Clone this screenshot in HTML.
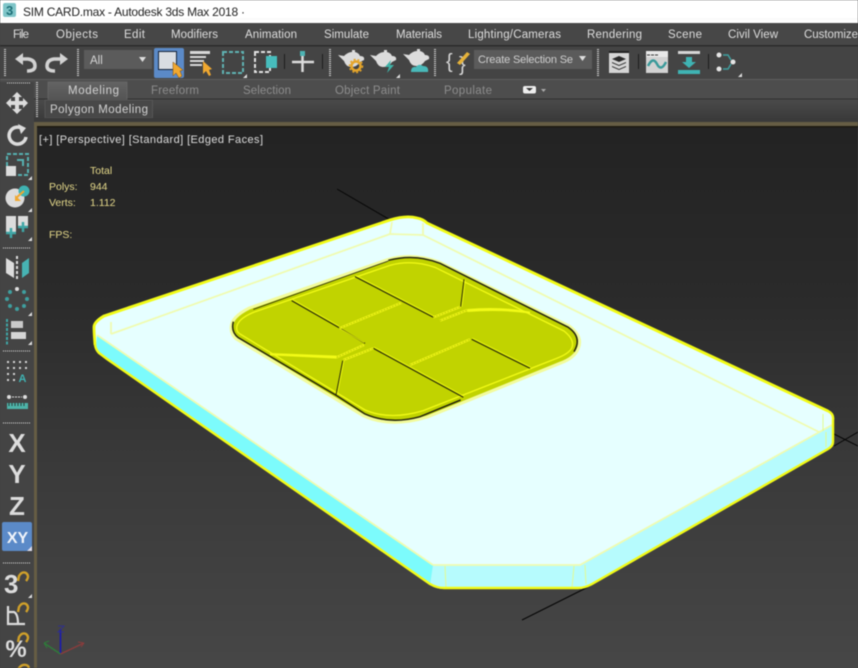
<!DOCTYPE html>
<html>
<head>
<meta charset="utf-8">
<style>
html,body{margin:0;padding:0;background:#444;width:858px;height:668px;overflow:hidden}
svg{display:block;filter:blur(.4px)}
text{font-family:"Liberation Sans",sans-serif}
</style>
</head>
<body>
<svg width="858" height="668" viewBox="0 0 858 668" xmlns="http://www.w3.org/2000/svg">
<defs>
<linearGradient id="vp" x1="0" y1="0" x2="0" y2="1">
<stop offset="0" stop-color="#232323"/><stop offset=".3" stop-color="#2a2a2a"/><stop offset=".62" stop-color="#3a3a3a"/><stop offset="1" stop-color="#474747"/>
</linearGradient>
<linearGradient id="row2" x1="0" y1="0" x2="0" y2="1">
<stop offset="0" stop-color="#4a4a4a"/><stop offset="1" stop-color="#3b3b3b"/>
</linearGradient>
<linearGradient id="tab" x1="0" y1="0" x2="0" y2="1">
<stop offset="0" stop-color="#636363"/><stop offset="1" stop-color="#545454"/>
</linearGradient>
<g id="pot"><path d="M-13 -6L-7 -5Q-3 -9 1 -9L1 -11L4 -11L4 -9Q8 -8 9 -5Q14 -5 13 -1L9 1Q6 6 0 6Q-5 6 -7 0Z" fill="#dcdcdc"/></g>
</defs>

<!-- title -->
<rect x="-3" y="-3" width="864" height="26" fill="#fff"/>
<rect y="18.500" width="858" height="1" fill="#f6f6f6"/>
<rect x="3" y="3" width="13" height="14" rx="2" fill="#7fc5c8"/>
<text x="6" y="15" font-size="13" font-weight="bold" fill="#1d6f77">3</text>
<text x="23" y="16" font-size="12" fill="#222" textLength="222">SIM CARD.max - Autodesk 3ds Max 2018 ·</text>

<!-- menu -->
<rect y="23" width="858" height="23" fill="#474747"/>
<rect y="45" width="858" height="1.500" fill="#2b2b2b"/>
<g font-size="11.500" fill="#dedede">
<text x="13" y="38" textLength="16">File</text>
<text x="56" y="38" textLength="42">Objects</text>
<text x="124" y="38" textLength="21">Edit</text>
<text x="171" y="38" textLength="47">Modifiers</text>
<text x="245" y="38" textLength="52">Animation</text>
<text x="324" y="38" textLength="45">Simulate</text>
<text x="396" y="38" textLength="46">Materials</text>
<text x="468" y="38" textLength="93">Lighting/Cameras</text>
<text x="587" y="38" textLength="55">Rendering</text>
<text x="668" y="38" textLength="34">Scene</text>
<text x="728" y="38" textLength="50">Civil View</text>
<text x="804" y="38" textLength="54">Customize</text>
</g>

<!-- toolbar -->
<rect y="46.500" width="858" height="33" fill="#444"/>
<rect y="79" width="858" height="1" fill="#5e5e5e"/>
<g stroke="#cfcfcf" stroke-width="2" stroke-dasharray="1 1" fill="none">
<path d="M5 49V76M78 49V76M330 49V76M435 49V76M598 49V76"/>
</g>
<g fill="none" stroke="#d2d2d2" stroke-width="3.500">
<path d="M20 59H28Q35 60 35 66Q35 71 27 71"/>
<path d="M62 59H54Q47 60 47 66Q47 71 55 71"/>
</g>
<path d="M15 59L23 53V65Z M68 59L60 53V65Z" fill="#d2d2d2"/>

<rect x="84" y="50" width="68" height="19" fill="#5b5b5b"/>
<text x="90" y="64" font-size="11.500" fill="#d5d5d5">All</text>
<path d="M139 57H146L142.500 62Z" fill="#ddd"/>

<rect x="154" y="48" width="30" height="30" rx="2" fill="#5b8ac8"/>
<rect x="158.500" y="51.500" width="18" height="18" fill="#d9dde2" stroke="#16233a" stroke-width="1"/>
<path d="M173 62L173 76L176 73L179 78L182 76L180 71L183 70Z" fill="#f0a830" stroke="#7a4a10" stroke-width=".5"/>

<g fill="#d8d8d8"><rect x="190" y="51" width="20" height="3"/><rect x="190" y="56" width="16" height="2"/><rect x="190" y="60" width="14" height="2"/><rect x="190" y="64" width="12" height="2"/></g>
<path d="M203 61L203 74L206 71L209 76L211 75L209 70L212 69Z" fill="#f0a830"/>

<rect x="223" y="52" width="20" height="21" fill="none" stroke="#5fb3b3" stroke-width="2" stroke-dasharray="4 2"/>
<path d="M247 74V78H243Z" fill="#ddd"/>
<rect x="255" y="52" width="15" height="20" fill="none" stroke="#e2e2e2" stroke-width="2" stroke-dasharray="4 2"/>
<rect x="266" y="56" width="11" height="12" fill="#47bdbd"/>
<rect x="284" y="54" width="1" height="15" fill="#1d1d1d"/>
<rect x="322" y="54" width="1" height="15" fill="#1d1d1d"/>
<path d="M292 62H314M302.500 56V72" stroke="#dcdcdc" stroke-width="2.500" fill="none"/>
<rect x="300" y="51" width="5" height="5" fill="#4db3b3"/>

<use href="#pot" x="351" y="61"/>
<circle cx="356" cy="66" r="4.500" fill="none" stroke="#e5a52a" stroke-width="2.500"/>
<circle cx="356" cy="66" r="6.500" fill="none" stroke="#e5a52a" stroke-width="1.500" stroke-dasharray="2 2"/>
<use href="#pot" x="383" y="61"/>
<path d="M391 60L385 67H389L387 73L394 65H390Z" fill="#3fb3a8"/>
<path d="M400 74V78H396Z" fill="#ddd"/>
<use href="#pot" x="416" y="60"/>
<path d="M411 72Q411 66 416 67Q419 63 423 66Q429 66 428 72Z" fill="#49b9b9"/>

<text x="446" y="68" font-size="20" fill="#d5d5d5">{</text>
<text x="459" y="71" font-size="20" fill="#d5d5d5">}</text>
<path d="M457 63L467 52L470 54L460 65Z" fill="#e5b23a"/>
<rect x="474" y="50" width="118" height="19" fill="#5b5b5b"/>
<text x="478" y="63" font-size="11" fill="#cfcfcf" textLength="95">Create Selection Se</text>
<path d="M579 56H586L582.500 61Z" fill="#ddd"/>

<rect x="609" y="51" width="20" height="22" fill="#d5d5d5"/>
<rect x="609" y="51" width="20" height="2" fill="#222"/>
<path d="M619 56L626 59L619 62L612 59Z M612 62L619 65L626 62L626 63L619 66L612 63Z M612 66L619 69L626 66L626 67L619 70L612 67Z" fill="#2a2a2a"/>
<rect x="638" y="54" width="1" height="15" fill="#1d1d1d"/>
<rect x="646" y="51" width="22" height="22" fill="#d2d2d2"/>
<rect x="646" y="51" width="22" height="6" fill="#e8e8e8"/>
<path d="M647 55H659" stroke="#333" stroke-width="1" stroke-dasharray="3 1" fill="none"/>
<path d="M648 66Q653 56 657 64T666 62" stroke="#3a9a9a" stroke-width="2.500" fill="none"/>
<rect x="678" y="51" width="22" height="3" fill="#d5d5d5"/>
<path d="M686 57H692V62H696L689 68L682 62H686Z" fill="#3fb3b3"/>
<rect x="678" y="70" width="22" height="4" fill="#3fb3b3"/>
<rect x="708" y="54" width="1" height="15" fill="#1d1d1d"/>
<g fill="#e5e5e5"><circle cx="719" cy="55" r="2.500"/><circle cx="719" cy="69" r="2.500"/><circle cx="733" cy="62" r="2.500"/></g>
<path d="M723 55H728L731 60M723 69H728L731 64" stroke="#3f9f9f" stroke-width="1.500" fill="none"/>
<path d="M742 73V77H738Z" fill="#ddd"/>

<!-- ribbon -->
<rect y="80" width="858" height="19" fill="#4d4d4d"/>
<rect y="98.500" width="858" height="1" fill="#2f2f2f"/>
<rect x="48" y="82" width="79" height="18" fill="url(#tab)" stroke="#6e6e6e" stroke-width=".6"/>
<g font-size="11.500">
<text x="68" y="94" fill="#d2d2d2" textLength="51">Modeling</text>
<g fill="#8d8d8d">
<text x="151" y="94" textLength="48">Freeform</text>
<text x="243" y="94" textLength="48">Selection</text>
<text x="335" y="94" textLength="65">Object Paint</text>
<text x="444" y="94" textLength="48">Populate</text>
</g>
</g>
<rect x="523" y="86" width="13" height="7.500" rx="2" fill="#eee"/>
<path d="M526 88H533L529.500 91Z" fill="#333"/>
<path d="M541 89H546L543.500 92Z" fill="#aaa"/>
<rect y="99.500" width="858" height="19" fill="url(#row2)"/>
<rect x="45" y="100" width="107.500" height="18" fill="#484848" stroke="#5a5a5a" stroke-width=".8"/>
<text x="50" y="113" font-size="11.500" fill="#d2d2d2" textLength="98">Polygon Modeling</text>
<rect y="118" width="858" height="5" fill="#3a3a3a"/>
<path d="M37 82V118" stroke="#ccc" stroke-width="2" stroke-dasharray="1 1" fill="none"/>

<!-- viewport -->
<rect x="0" y="82" width="34" height="590" fill="#444"/>
<path d="M7 83H30" stroke="#ddd" stroke-dasharray="1 1" fill="none"/>
<rect x="34" y="122" width="828" height="4" fill="#665d44"/>
<rect x="34" y="122" width="3" height="550" fill="#665d44"/>
<rect x="37" y="126" width="825" height="546" fill="url(#vp)"/>
<rect x="37" y="126" width="825" height="1.500" fill="#1c1a10"/>

<g stroke="#050505" stroke-width="1" fill="none">
<path d="M337 189L392 221"/>
<path d="M522 620L590 586"/>
<path d="M834 446L858 432M834 434L858 446"/>
</g>

<g font-size="11" fill="#dcdcdc">
<text x="39" y="143" textLength="224">[+] [Perspective] [Standard] [Edged Faces]</text>
</g>
<g font-size="10.500" fill="#e5d98a">
<text x="90" y="174">Total</text>
<text x="49" y="190">Polys:</text><text x="90" y="190">944</text>
<text x="49" y="206">Verts:</text><text x="90" y="206">1.112</text>
<text x="49" y="238">FPS:</text>
</g>

<!-- card -->
<path d="M93 327Q93 321 103 315L390 219Q406 214 417 217Q423 218 427 222L828 410Q834 414 833 420L833 442Q833 446 828 450L592 585Q585 589 578 589L444 589Q437 589 430 585L107 360L99 354Q96 350 96 345Z" fill="#e6ffff"/>
<path d="M97 335L433 565L436 586L430 585L107 360L99 354Q96 350 96 345Z" fill="#7cfbfc"/>
<path d="M433 565L580 565L585 587L444 589Q437 589 430 585Z" fill="#b6fbfd"/>
<path d="M580 565L820 432L832 425L833 442Q833 446 828 450L592 585L585 587Z" fill="#b6fbfd"/>
<g stroke="#f0fcb0" stroke-width="1.800" fill="none">
<path d="M111 334L390 234L423 235L819 432"/>
<path d="M392 222L390 234M423 223L423 235M111 334L111 322"/>
<path d="M97 335L433 565"/>
<path d="M433 565L580 565L832 425"/>
</g>
<g stroke="#e3fb90" stroke-width="1" fill="none">
<path d="M823 414L823 431M445 566L446 588M574 566L572 588M585 565L586 584M826 432L826 447"/>
</g>
<path d="M95 345Q94 332 94 327Q94 322 104 316L390 220Q406 215 417 218Q423 219 427 223L828 411" fill="none" stroke="#f2fb16" stroke-width="2.800"/>
<path d="M828 411Q834 414 833 420L833 442Q833 446 828 449L592 584Q585 588 578 588L444 588Q437 588 430 584L107 359L99 353Q96 350 95 345" fill="none" stroke="#f2fb16" stroke-width="2.400"/>

<!-- chip, in 3x local coordinates -->
<g transform="translate(220 250) scale(.33333)">
<path d="M38 235Q36 205 90 178L505 33Q575 12 655 40L1045 232Q1085 262 1070 295Q1060 320 1020 335L620 497Q510 530 430 492L50 262Q38 250 38 235Z" fill="#f2fb9c" stroke="#f2fb9c" stroke-width="18"/>
<path d="M38 235Q36 205 90 178L505 33Q575 12 655 40L1045 232Q1085 262 1070 295Q1060 320 1020 335L620 497Q510 530 430 492L50 262Q38 250 38 235Z" fill="#c1d300"/>
<!-- dark rim -->
<path d="M40 215Q32 245 55 263L350 437L435 492Q510 525 600 500L722 450" fill="none" stroke="#23230c" stroke-width="4.500"/>
<path d="M505 31Q585 10 660 40L1045 232Q1088 262 1062 305" fill="none" stroke="#23230c" stroke-width="4.500"/>
<path d="M100 178L505 33" fill="none" stroke="#23230c" stroke-width="2.500"/>
<!-- yellow inner contour -->
<path d="M50 235Q50 208 100 187L510 46Q575 28 645 52L1032 243Q1066 270 1055 295Q1045 312 1010 325L610 482Q510 512 435 480L60 252Q50 245 50 235Z" fill="none" stroke="#f2fb16" stroke-width="4"/>
<!-- contact separators -->
<g fill="none" stroke="#181808" stroke-width="3">
<path d="M215 152L355 232L435 280"/>
<path d="M405 80L640 202"/>
<path d="M460 295L730 442"/>
<path d="M755 268L930 355"/>
</g>
<g fill="none" stroke="#f2fb16" stroke-width="2">
<path d="M217 148L357 228M407 76L642 198M462 291L732 438M757 264L932 351M358 235L433 278"/>
</g>
<g fill="none" stroke="#eef515" stroke-width="7">
<path d="M358 235L545 158"/>
<path d="M570 345L750 268"/>
<path d="M350 322L432 285"/>
<path d="M370 330L460 295"/>
<path d="M640 202L722 170"/>
<path d="M660 212L742 180"/>
</g>
<g fill="none" stroke="#a8b800" stroke-width="2" stroke-dasharray="5 4">
<path d="M358 235L545 158M570 345L750 268M350 322L432 285M370 330L460 295M640 202L722 170M660 212L742 180"/>
</g>
<path d="M150 309L350 317L350 326L150 316Z" fill="#f2fb16"/>
<path d="M742 177Q845 168 930 185L930 191Q845 178 742 186Z" fill="#f2fb16"/>
<g fill="none" stroke="#181808" stroke-width="2.500">
<path d="M722 170L732 88M348 435L368 332"/>
</g>
<g fill="none" stroke="#f2fb16" stroke-width="2">
<path d="M726 170L736 90M352 435L372 332"/>
</g>
</g>

<!-- left toolbar -->
<g stroke="#ddd" stroke-dasharray="1 1" fill="none">
<path d="M3 248H31M3 351H31M3 423H31M3 563H31"/>
</g>
<!-- move -->
<path d="M17 92L22 97H19V101H23V98L28 103L23 108V105H19V109H22L17 114L12 109H15V105H11V108L6 103L11 98V101H15V97H12Z" fill="#dcdcdc"/>
<!-- rotate -->
<path d="M24 130A8.500 8.500 0 1 0 26 137" fill="none" stroke="#dcdcdc" stroke-width="3.500"/>
<path d="M18 124L26 128L21 134Z" fill="#dcdcdc"/>
<!-- scale -->
<rect x="7" y="154" width="21" height="21" fill="none" stroke="#55b0b0" stroke-width="2" stroke-dasharray="4 2"/>
<rect x="6" y="166" width="10" height="10" fill="#dcdcdc"/>
<path d="M17 160H23V166" fill="none" stroke="#55b0b0" stroke-width="2"/>
<path d="M32 176V180H28Z" fill="#ddd"/>
<!-- placement -->
<circle cx="15" cy="198" r="9.500" fill="#dcdcdc"/>
<circle cx="24" cy="191" r="5.500" fill="#3fb3b3"/>
<path d="M24 191L16 198" stroke="#f0a830" stroke-width="2"/>
<path d="M15 195V201H21Z" fill="#f0a830"/>
<path d="M32 208V212H28Z" fill="#ddd"/>
<!-- box create -->
<rect x="6" y="216" width="10" height="18" fill="#dcdcdc"/><rect x="18" y="216" width="10" height="10" fill="#dcdcdc"/>
<path d="M11 228V238M6 233H16M23 222V232M18 227H28" stroke="#3fa5a5" stroke-width="2.500" fill="none"/>
<path d="M32 237V241H28Z" fill="#ddd"/>
<!-- mirror -->
<path d="M6 258L14 263V278L6 273Z" fill="#dcdcdc"/>
<path d="M29 258L22 263V278L29 273Z" fill="#47b3b3"/>
<path d="M17 256V280" stroke="#ddd" stroke-width="2" stroke-dasharray="3 2"/>
<!-- ring array -->
<g fill="#3f9f9f"><circle cx="17" cy="289" r="2" fill="#ddd"/><circle cx="10" cy="292" r="2"/><circle cx="24" cy="292" r="2"/><circle cx="7" cy="299" r="2"/><circle cx="27" cy="299" r="2"/><circle cx="10" cy="306" r="2"/><circle cx="24" cy="306" r="2"/><circle cx="17" cy="309" r="2"/></g>
<path d="M32 312V316H28Z" fill="#ddd"/>
<!-- align -->
<path d="M7 319V345" stroke="#3fa5a5" stroke-width="2" stroke-dasharray="3 1.500"/>
<rect x="11" y="321" width="12" height="7" fill="#c9c9c9"/><rect x="11" y="332" width="15" height="7" fill="#d5d5d5"/>
<path d="M32 341V345H28Z" fill="#ddd"/>
<!-- snap -->
<g fill="#d5d5d5"><rect x="7" y="361" width="2" height="2"/><rect x="13" y="361" width="2" height="2"/><rect x="19" y="361" width="2" height="2"/><rect x="25" y="361" width="2" height="2"/><rect x="7" y="367" width="2" height="2"/><rect x="13" y="367" width="2" height="2"/><rect x="19" y="367" width="2" height="2"/><rect x="25" y="367" width="2" height="2"/><rect x="7" y="373" width="2" height="2"/><rect x="13" y="373" width="2" height="2"/><rect x="7" y="379" width="2" height="2"/><rect x="13" y="379" width="2" height="2"/></g>
<text x="18.500" y="382" font-size="11" font-weight="bold" fill="#3fb3b3">A</text>
<!-- measure -->
<g fill="#ddd"><circle cx="9" cy="397" r="2"/><circle cx="25" cy="397" r="2"/></g>
<path d="M12 397H22" stroke="#ddd" stroke-dasharray="2 1"/>
<rect x="7" y="403" width="21" height="6" fill="#4db3a8"/>
<path d="M9 403V406M12 403V406M15 403V406M18 403V406M21 403V406M24 403V406" stroke="#222" stroke-width=".8"/>

<g font-weight="bold" fill="#dcdcdc" text-anchor="middle">
<text x="17" y="452" font-size="26">X</text>
<text x="17" y="483" font-size="26">Y</text>
<text x="17" y="515" font-size="26">Z</text>
</g>
<rect x="2" y="522" width="30" height="29" rx="2" fill="#5b8ac8"/>
<text x="17.500" y="543" font-size="16" font-weight="bold" fill="#f0f4fa" text-anchor="middle">XY</text>
<path d="M32 546V551H27Z" fill="#dde"/>
<text x="4" y="593" font-size="26" font-weight="bold" fill="#dcdcdc">3</text>
<g fill="none" stroke="#cfa02a" stroke-width="2.400">
<path d="M18 581L19 576Q22 571 26 573Q30 576 26 581"/>
<path d="M18 612L19 607Q22 602 26 604Q30 607 26 612"/>
<path d="M18 642L19 637Q22 632 26 634Q30 637 26 642"/>
<path d="M18 670L19 668Q22 664 26 665Q30 666 28 670"/>
</g>
<path d="M32 594V598H28Z" fill="#ddd"/>
<path d="M8 606V624H25M8 612H14Q18 614 18 624" fill="none" stroke="#dcdcdc" stroke-width="2.200"/>
<text x="16" y="657" font-size="24" font-weight="bold" fill="#dcdcdc" text-anchor="middle">%</text>

<!-- axis -->
<path d="M60.500 654V629" stroke="#1616b8" stroke-width="1.500"/>
<path d="M60.500 654L44 643" stroke="#2f7a3a" stroke-width="1.500"/>
<path d="M60.500 654L84 643" stroke="#8a3c3c" stroke-width="1.500"/>
<path d="M58 626H64L58 632H64" fill="none" stroke="#30308a" stroke-width="1"/>
<path d="M44 643L49 641M44 643L47 648" stroke="#2f7a3a" fill="none"/>
<path d="M84 643L78 642M84 643L81 647" stroke="#8a3c3c" fill="none"/>
</svg>
</body>
</html>
